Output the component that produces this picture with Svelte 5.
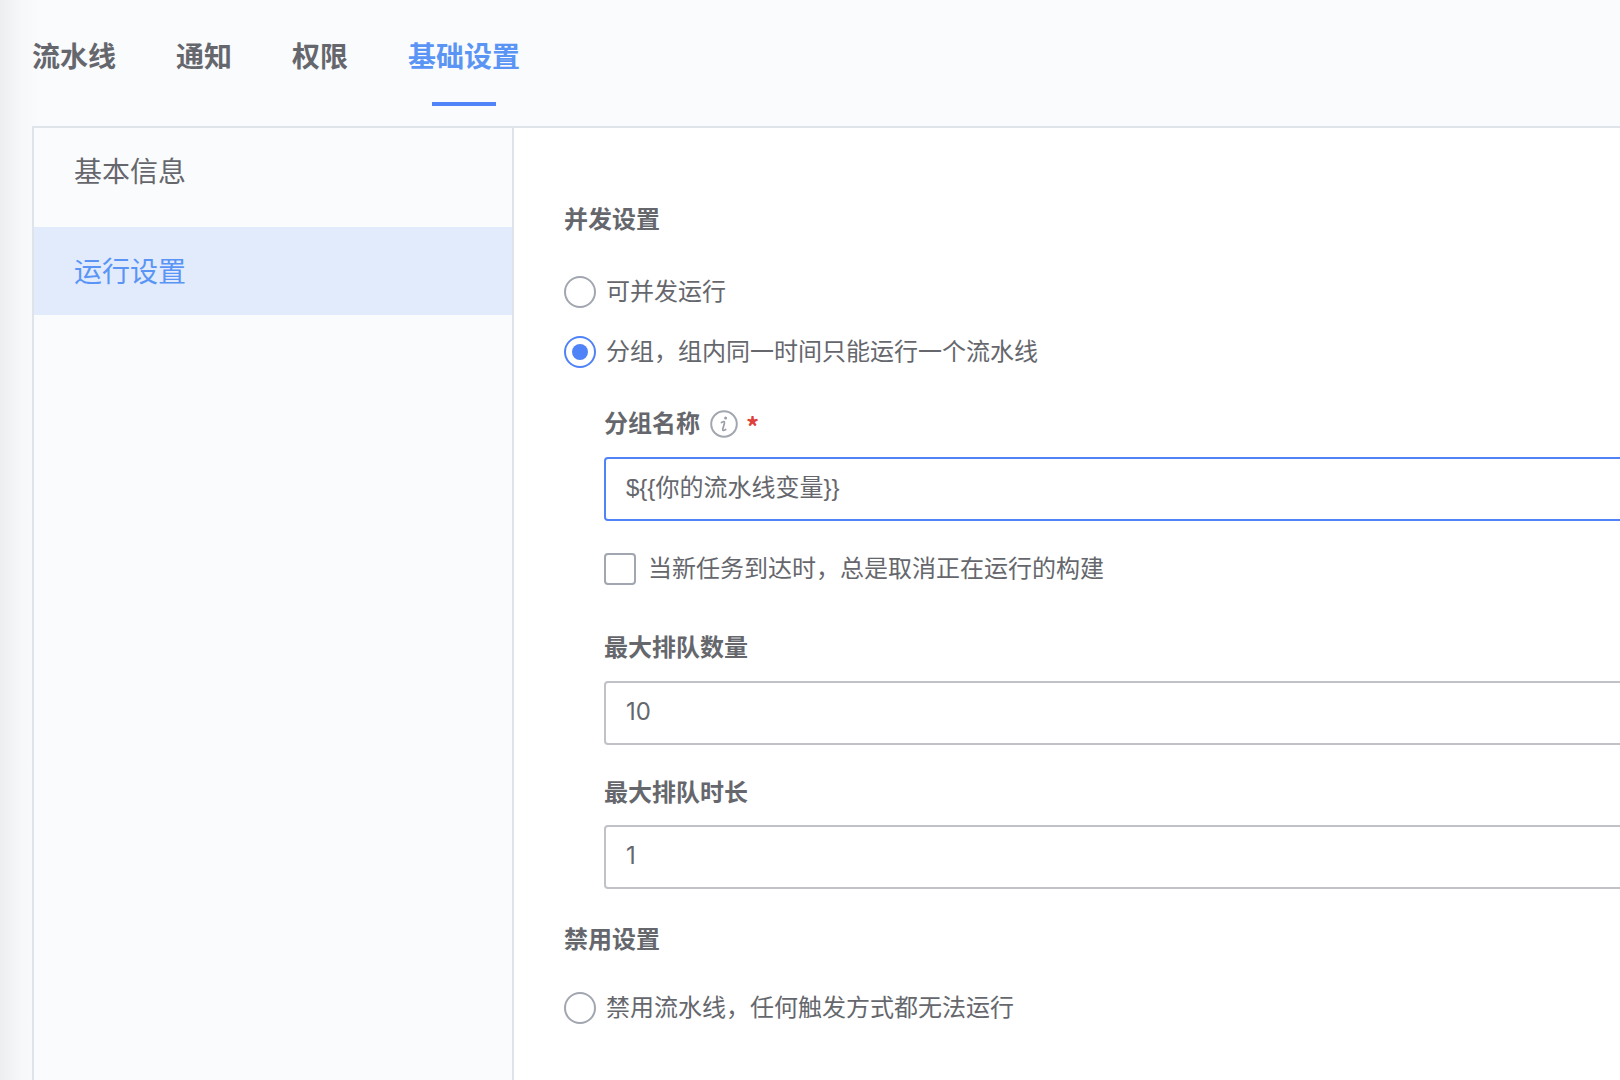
<script>
  const tabs = ['流水线', '通知', '权限', '基础设置'];
  const activeTab = '基础设置';
  const menu = ['基本信息', '运行设置'];
  const activeMenu = '运行设置';
</script>

<div class="page">
  <span class="ghost">WeTERM</span>
  <nav class="tabs">
    {#each tabs as tab}
      <div class="tab" class:active={tab === activeTab}>{tab}</div>
    {/each}
  </nav>

  <div class="panel">
    <aside class="side">
      {#each menu as item}
        <div class="side-item" class:active={item === activeMenu}>{item}</div>
      {/each}
    </aside>

    <main class="content">
      <h3 class="heading">并发设置</h3>
      <label class="radio">
        <span class="circle"></span>
        <span class="text">可并发运行</span>
      </label>
      <label class="radio second">
        <span class="circle on"></span>
        <span class="text">分组，组内同一时间只能运行一个流水线</span>
      </label>

      <div class="group">
        <div class="field-label first">
          分组名称
          <svg class="info" viewBox="0 0 28 28" width="28" height="28" fill="none">
            <circle cx="14" cy="14" r="12.8" stroke="#a2a6b0" stroke-width="2" />
            <circle cx="15.6" cy="8" r="1.5" fill="#9a9ea8" />
            <path d="M11.4 12.6c1.3-1 2.9-1.2 3.1-.4.2.7-.2 1.7-.7 3.2l-1 3.5c-.4 1.5.3 2.4 2.9.6" stroke="#9a9ea8" stroke-width="1.7" stroke-linecap="round" />
          </svg>
          <span class="star">*</span>
        </div>
        <div class="input focus">{'${{你的流水线变量}}'}</div>

        <label class="check">
          <span class="box"></span>
          <span class="text">当新任务到达时，总是取消正在运行的构建</span>
        </label>

        <div class="field-label queue">最大排队数量</div>
        <div class="input">10</div>

        <div class="field-label duration">最大排队时长</div>
        <div class="input">1</div>
      </div>

      <h3 class="heading disable">禁用设置</h3>
      <label class="radio last">
        <span class="circle"></span>
        <span class="text">禁用流水线，任何触发方式都无法运行</span>
      </label>
    </main>
  </div>
</div>

<style>
  :global(html),
  :global(body) {
    margin: 0;
    overflow: hidden;
  }

  .page {
    position: relative;
    height: 1080px;
    width: 1620px;
    overflow: hidden;
    padding-left: 32px;
    box-sizing: border-box;
    background: linear-gradient(90deg, #eceef0 0, #f6f7f9 20px, #fafbfd 40px);
    font-family: 'Noto Sans CJK SC', 'Liberation Sans', sans-serif;
    color: #65676d;
    display: flex;
    flex-direction: column;
  }

  .ghost {
    position: absolute;
    left: 2px;
    top: 3px;
    font-family: 'Liberation Sans', sans-serif;
    font-size: 26px;
    line-height: 30px;
    color: rgba(0, 0, 0, 0.015);
  }

  .tabs {
    display: flex;
    gap: 60px;
    height: 126px;
    flex-shrink: 0;
    box-sizing: border-box;
  }

  .tab {
    position: relative;
    font-size: 28px;
    font-weight: 600;
    line-height: 40px;
    padding-top: 35px;
  }

  .tab.active {
    color: #5a95f5;
  }

  .tab.active::after {
    content: '';
    position: absolute;
    left: 24px;
    right: 24px;
    top: 102px;
    height: 4px;
    background: #4f83f7;
  }

  .panel {
    flex: 1;
    display: flex;
    min-height: 0;
    border-top: 2px solid #dfe4ea;
    border-left: 2px solid #dfe4ea;
  }

  .side {
    width: 478px;
    flex-shrink: 0;
    border-right: 2px solid #dfe4ea;
    background: #fafbfd;
  }

  .side-item {
    height: 88px;
    padding-left: 40px;
    font-size: 28px;
    line-height: 85px;
    margin-bottom: 11px;
  }

  .side-item.active {
    background: #e1ebfc;
    color: #5a95f5;
    line-height: 86px;
  }

  .content {
    flex: 1;
    background: #fff;
    padding: 70px 0 0 50px;
    min-width: 0;
  }

  .heading {
    margin: 0;
    font-size: 24px;
    font-weight: 600;
    line-height: 40px;
  }

  .radio {
    display: flex;
    align-items: center;
    gap: 10px;
    font-size: 24px;
    line-height: 32px;
    margin-top: 38px;
  }

  .radio.second {
    margin-top: 28px;
  }

  .text {
    line-height: 26px;
    margin-bottom: 5px;
  }

  .circle {
    width: 32px;
    height: 32px;
    border: 2px solid #a2a6b0;
    border-radius: 50%;
    box-sizing: border-box;
    flex-shrink: 0;
    position: relative;
  }

  .circle.on {
    border-color: #4f83f7;
  }

  .circle.on::after {
    content: '';
    position: absolute;
    left: 6px;
    top: 6px;
    width: 16px;
    height: 16px;
    border-radius: 50%;
    background: #4f83f7;
  }

  .group {
    padding-left: 40px;
    width: 1300px;
  }

  .field-label {
    display: flex;
    align-items: center;
    font-size: 24px;
    font-weight: 600;
    line-height: 40px;
  }

  .field-label.first {
    margin-top: 34px;
    margin-bottom: 15px;
  }

  .field-label.queue {
    margin-top: 41px;
    margin-bottom: 15px;
  }

  .field-label.duration {
    margin-top: 26px;
    margin-bottom: 14px;
  }

  .info {
    margin-left: 10px;
    margin-top: 4px;
  }

  .star {
    margin-left: 8px;
    margin-top: 8px;
    color: #e0403a;
    font-weight: 700;
    font-size: 26px;
    line-height: 24px;
  }

  .input {
    height: 64px;
    box-sizing: border-box;
    border: 2px solid #c0c2c8;
    border-radius: 4px;
    padding-left: 20px;
    font-family: Inter, 'Noto Sans CJK SC', sans-serif;
    font-size: 24px;
    line-height: 58px;
    background: #fff;
  }

  .input.focus {
    border-color: #4f83f7;
    font-family: 'Liberation Sans', 'Noto Sans CJK SC', sans-serif;
    padding-left: 20px;
    word-spacing: 1px;
  }

  .check {
    display: flex;
    align-items: center;
    gap: 12px;
    font-size: 24px;
    line-height: 32px;
    margin-top: 32px;
  }

  .box {
    width: 32px;
    height: 32px;
    border: 2px solid #a2a6b0;
    border-radius: 4px;
    box-sizing: border-box;
  }

  .heading.disable {
    margin-top: 29px;
  }

  .radio.last {
    margin-top: 34px;
  }
</style>
